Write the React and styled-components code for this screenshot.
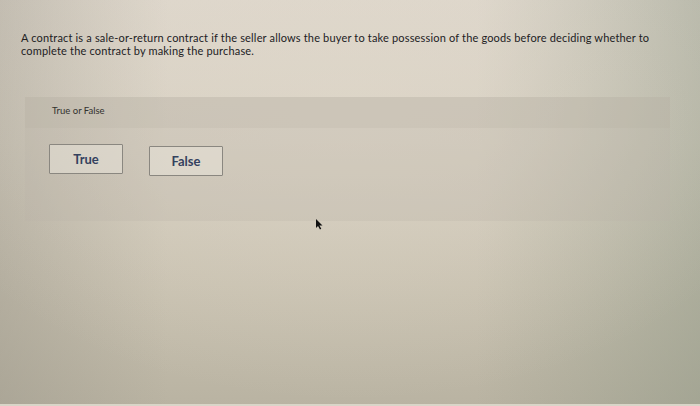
import React from 'react'
import styled, { createGlobalStyle } from 'styled-components'

const GlobalStyle = createGlobalStyle`
  html, body {
    margin: 0;
    padding: 0;
    background: #c4bfb1;
  }
  body {
    font-family: Lato, "Open Sans", Arial, sans-serif;
    color: #2b2a28;
  }
`

const Page = styled.div`
  position: relative;
  width: 700px;
  height: 406px;
  overflow: hidden;
  display: flex;
  flex-direction: column;
  background:
    radial-gradient(ellipse 460px 300px at 50% 25%, rgba(226, 218, 204, 0.45) 0%, rgba(226, 218, 204, 0) 100%),
    linear-gradient(90deg, rgba(150, 146, 134, 0.4) 0%, rgba(150, 146, 134, 0) 24%, rgba(150, 146, 134, 0) 68%, rgba(138, 148, 130, 0.45) 100%),
    linear-gradient(180deg, #ddd6cb 0%, #d6cfc1 35%, #c8c1b0 70%, #b9b3a2 100%);
`

const Main = styled.main`
  flex: 1;
  padding: 31px 0 0 21px;
`

const Question = styled.p`
  margin: 0;
  width: 660px;
  font-size: 11px;
  line-height: 13px;
  color: #22211f;
  letter-spacing: 0.17px;
`

const Panel = styled.section`
  margin: 40px 0 0 4px;
  width: 645px;
  background: rgba(186, 180, 168, 0.28);
`

const PanelHeader = styled.div`
  height: 31px;
  box-sizing: border-box;
  padding: 8px 0 0 27px;
  font-size: 9.5px;
  line-height: 12px;
  color: #33322f;
  background: rgba(180, 174, 162, 0.2);
`

const Choices = styled.div`
  display: flex;
  gap: 26px;
  padding: 16px 24px 45px;
`

const Choice = styled.button`
  width: 74px;
  height: 30px;
  box-sizing: border-box;
  border: 1px solid #8a8780;
  border-radius: 1px;
  background: rgba(234, 229, 220, 0.5);
  font-family: Lato, "Open Sans", Arial, sans-serif;
  font-weight: 700;
  font-size: 13px;
  color: #34415e;
  margin-top: ${p => p.$drop || 0}px;
  padding: 0;
`

const Cursor = styled.svg`
  position: absolute;
  left: 315px;
  top: 219px;
  width: 8px;
  height: 11px;
`

const BottomEdge = styled.div`
  height: 2px;
  background: #d9d5c8;
`

export default function App() {
  return (
    <>
      <GlobalStyle />
      <Page>
        <Main>
          <Question>
            A contract is a sale-or-return contract if the seller allows the buyer to take possession of the goods before deciding whether to complete the contract by making the purchase.
          </Question>
          <Panel>
            <PanelHeader>True or False</PanelHeader>
            <Choices>
              <Choice>True</Choice>
              <Choice $drop={2}>False</Choice>
            </Choices>
          </Panel>
        </Main>
        <BottomEdge />
        <Cursor viewBox="0 0 8 11">
          <path d="M1 0 L1 9 L3 7 L5 10.5 L6.3 9.8 L4.4 6.6 L7.5 6.6 Z" fill="#111" />
        </Cursor>
      </Page>
    </>
  )
}
